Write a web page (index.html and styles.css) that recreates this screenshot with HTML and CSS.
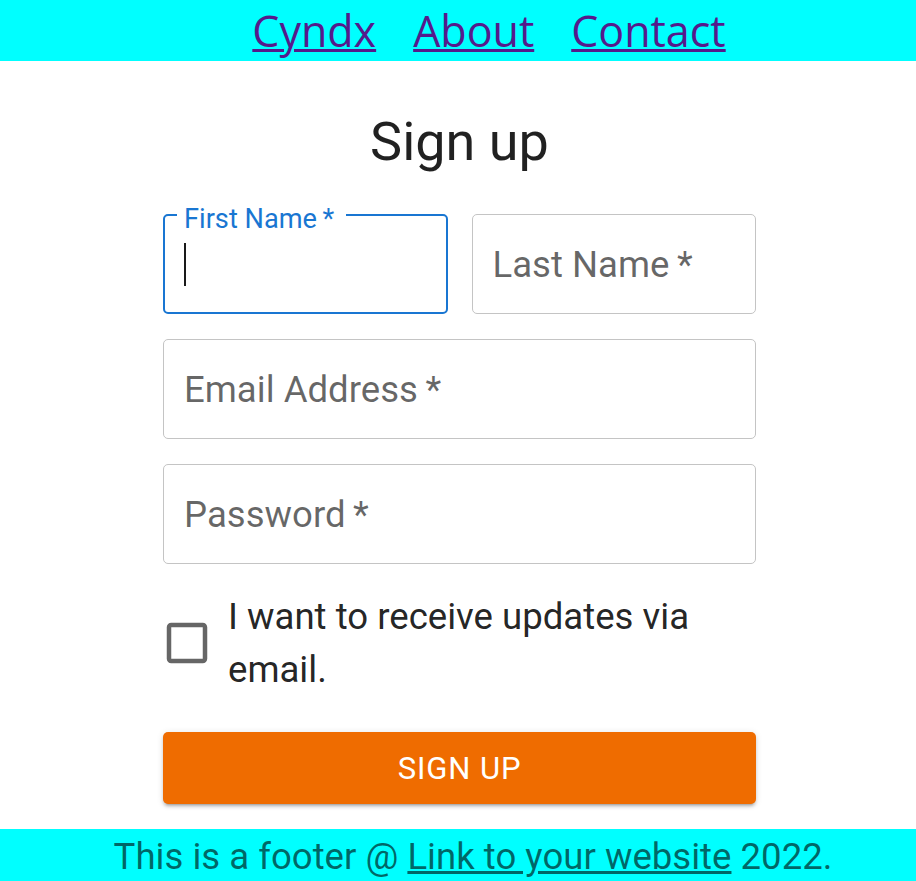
FILE: index.html
```html
<!DOCTYPE html>
<html lang="en">
<head>
<meta charset="utf-8">
<title>Sign up</title>
<link rel="stylesheet" href="styles.css">
</head>
<body>
<nav class="topnav">
  <a class="navlink" href="#">Cyndx</a>
  <a class="navlink" href="#">About</a>
  <a class="navlink" href="#">Contact</a>
</nav>
<main class="page">
  <div class="card">
    <h1 class="title">Sign up</h1>
    <form class="form">
      <div class="row2">
        <div class="field field--focused">
          <span class="float-label">First Name&thinsp;*</span>
          <span class="caret"></span>
        </div>
        <div class="field"><span class="placeholder">Last Name&thinsp;*</span></div>
      </div>
      <div class="field field--gap"><span class="placeholder">Email Address&thinsp;*</span></div>
      <div class="field field--gap"><span class="placeholder">Password&thinsp;*</span></div>
      <label class="check">
        <svg class="check-icon" viewBox="0 0 24 24" aria-hidden="true"><path d="M19 5v14H5V5h14m0-2H5c-1.11 0-2 .9-2 2v14c0 1.1.89 2 2 2h14c1.1 0 2-.9 2-2V5c0-1.1-.9-2-2-2z"/></svg>
        <span class="check-text">I want to receive updates via email.</span>
      </label>
      <button class="submit" type="button">Sign up</button>
    </form>
  </div>
</main>
<footer class="footer">This is a footer @ <a class="footlink" href="#">Link to your website</a> 2022.</footer>
</body>
</html>
```
FILE: styles.css
```css
html, body {
  margin: 0;
  padding: 0;
  background: #ffffff;
}
body {
  font-family: Roboto, "Liberation Sans", sans-serif;
}
.topnav {
  background: #00ffff;
  height: 61px;
  display: flex;
  justify-content: center;
  align-items: center;
  gap: 37px;
  padding-left: 62px;
}
.navlink {
  font-family: "Open Sans", "Noto Sans", sans-serif;
  font-size: 43px;
  color: #551a8b;
  text-decoration: underline;
  text-decoration-thickness: 3px;
  line-height: 1;
}
.page {
  display: flex;
  justify-content: center;
  padding-left: 3px;
}
.card {
  width: 593px;
}
.title {
  margin: 44px 0 36px;
  font-size: 54px;
  font-weight: 400;
  line-height: 73px;
  text-align: center;
  color: rgba(0, 0, 0, 0.87);
}
.form {
  display: flex;
  flex-direction: column;
}
.row2 {
  display: grid;
  grid-template-columns: 1fr 1fr;
  gap: 24px;
}
.field {
  position: relative;
  box-sizing: border-box;
  height: 100px;
  border: 1px solid #c4c4c4;
  border-radius: 5px;
  display: flex;
  align-items: center;
  padding-left: 20px;
}
.field--gap {
  margin-top: 25px;
}
.field--focused {
  border: 2px solid #1976d2;
  padding-left: 19px;
}
.placeholder {
  font-size: 36.6px;
  color: rgba(0, 0, 0, 0.6);
  white-space: nowrap;
}
.float-label {
  position: absolute;
  top: -11px;
  left: 12px;
  padding: 0 12px 0 7px;
  background: #ffffff;
  font-size: 27.2px;
  line-height: 28px;
  color: #1976d2;
  white-space: nowrap;
}
.caret {
  width: 2px;
  height: 43px;
  background: #1a1a1a;
}
.check {
  margin-top: 26px;
  display: flex;
  align-items: center;
  gap: 14px;
  margin-left: -3px;
  cursor: pointer;
}
.check-icon {
  flex: 0 0 auto;
  width: 54px;
  height: 54px;
  fill: rgba(0, 0, 0, 0.6);
}
.check-text {
  font-size: 36.6px;
  line-height: 53px;
  color: rgba(0, 0, 0, 0.87);
  padding-right: 60px;
}
.submit {
  margin-top: 36px;
  height: 72px;
  border: none;
  border-radius: 5px;
  background: #ef6c00;
  color: #ffffff;
  font-family: Roboto, "Liberation Sans", sans-serif;
  font-size: 31px;
  font-weight: 400;
  letter-spacing: 0.9px;
  text-transform: uppercase;
  box-shadow: 0 4px 2px -3px rgba(0, 0, 0, 0.2), 0 3px 3px 0 rgba(0, 0, 0, 0.14), 0 1px 7px 0 rgba(0, 0, 0, 0.12);
  cursor: pointer;
}
.footer {
  margin-top: 25px;
  background: #00ffff;
  color: rgba(0, 0, 0, 0.6);
  font-size: 36.6px;
  line-height: 56px;
  text-align: center;
  padding-left: 30px;
}
.footlink {
  color: inherit;
}
```
